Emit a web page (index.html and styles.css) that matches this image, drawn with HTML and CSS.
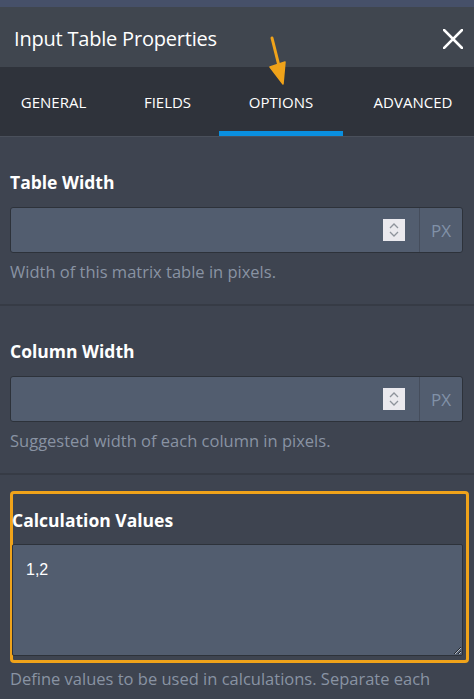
FILE: index.html
```html
<!DOCTYPE html>
<html lang="en">
<head>
    <meta charset="UTF-8">
    <meta name="viewport" content="width=device-width, initial-scale=1.0">
    <title>Input Table Properties</title>
    <link rel="stylesheet" href="styles.css">
</head>
<body>

    <div class="strip"></div>

    <header class="head">
        <h1>Input Table Properties</h1>
        <button class="close" type="button" aria-label="Close">
            <svg width="20" height="20" viewBox="0 0 20 20">
                <path d="M1 1 L19 19 M19 1 L1 19" stroke="#fff" stroke-width="2.6" stroke-linecap="square"/>
            </svg>
        </button>
    </header>

    <nav class="tabs">
        <a class="tab">GENERAL</a>
        <a class="tab">FIELDS</a>
        <a class="tab active">OPTIONS</a>
        <a class="tab">ADVANCED</a>
        <!-- pointer drawn over the tabs -->
        <svg class="arrow" width="30" height="56" viewBox="0 0 30 56">
            <path d="M8 2 L17 38" stroke="#f0a31a" stroke-width="3" stroke-linecap="round"/>
            <path d="M6 31 L19 48 L21 26 Z" fill="#f0a31a" stroke="#f0a31a" stroke-width="1.5" stroke-linejoin="round"/>
        </svg>
    </nav>

    <main>
        <section class="field">
            <label for="tw">Table Width</label>
            <div class="group">
                <div class="num">
                    <input type="text" id="tw">
                    <span class="spin">
                        <svg width="22" height="22" viewBox="0 0 22 22">
                            <path d="M7 9 L11 5 L15 9 M7 13 L11 17 L15 13" fill="none" stroke="#8e939c" stroke-width="1.3"/>
                        </svg>
                    </span>
                </div>
                <span class="unit">PX</span>
            </div>
            <p class="help">Width of this matrix table in pixels.</p>
        </section>

        <section class="field">
            <label for="cw">Column Width</label>
            <div class="group">
                <div class="num">
                    <input type="text" id="cw">
                    <span class="spin">
                        <svg width="22" height="22" viewBox="0 0 22 22">
                            <path d="M7 9 L11 5 L15 9 M7 13 L11 17 L15 13" fill="none" stroke="#8e939c" stroke-width="1.3"/>
                        </svg>
                    </span>
                </div>
                <span class="unit">PX</span>
            </div>
            <p class="help">Suggested width of each column in pixels.</p>
        </section>

        <section class="field last">
            <div class="mark">
                <label for="cv">Calculation Values</label>
                <textarea id="cv">1,2</textarea>
            </div>
            <p class="help">Define values to be used in calculations. Separate each</p>
        </section>
    </main>

</body>
</html>
```

FILE: styles.css
```css
* {
    box-sizing: border-box;
}

body {
    margin: 0;
    background: #3e4450;
    font-family: "Open Sans", "Noto Sans", sans-serif;
    color: #fff;
    height: 699px;
    overflow: hidden;
}

.strip {
    height: 7px;
    background: #465069;
}

.head {
    display: flex;
    align-items: center;
    justify-content: space-between;
    height: 60px;
    padding: 3px 11px 0 14px;
    background: #40464f;
}

.head h1 {
    margin: 0;
    font-size: 20px;
    font-weight: 400;
    letter-spacing: -0.2px;
}

.close {
    background: none;
    border: 0;
    padding: 0;
    width: 20px;
    height: 20px;
}

.tabs {
    position: relative;
    display: flex;
    height: 70px;
    background: #2f333b;
    border-bottom: 1px solid #4a505b;
}

.tab {
    flex: 1;
    display: flex;
    align-items: center;
    justify-content: center;
    font-size: 15px;
    color: #fff;
    border-bottom: 5px solid transparent;
    padding-top: 5px;
}

.tab:first-child {
    flex: 0 0 107px;
}

.tabs .tab:nth-child(2) {
    flex: 0 0 112px;
    padding-left: 9px;
}

.tab.active {
    flex: 0 0 124px;
    border-bottom-color: #0a8fdf;
}

.tab:nth-child(4) {
    padding-left: 9px;
}

.arrow {
    position: absolute;
    left: 264px;
    top: -31px;
}

.field {
    padding: 33px 10px 21px 10px;
    border-bottom: 2px solid #363b45;
}

.field label {
    display: block;
    font-weight: 700;
    font-size: 17.5px;
    line-height: 24px;
    margin-bottom: 13px;
}

.group {
    display: flex;
    height: 46px;
    margin-right: 1px;
    border: 1px solid #2d323a;
    border-radius: 3px;
    background: #525d6f;
}

.num {
    flex: 1;
    display: flex;
    align-items: center;
    padding-right: 14px;
}

.num input {
    flex: 1;
    height: 100%;
    border: 0;
    background: transparent;
    outline: none;
}

.spin {
    display: flex;
    width: 22px;
    height: 22px;
    background: #eae9ee;
}

.unit {
    width: 43px;
    display: flex;
    align-items: center;
    justify-content: center;
    border-left: 1px solid #454d5c;
    color: #8191a8;
    font-size: 17px;
}

.help {
    margin: 8px 0 0 0;
    font-size: 16.5px;
    line-height: 22px;
    color: #8993a3;
}

.field.last {
    padding-top: 16px;
    border-bottom: 0;
}

.mark {
    border: 3px solid #f0a31a;
    border-radius: 4px;
    margin-right: -5px;
    padding: 14px 3px 4px 0;
}

.mark label {
    margin-left: -1px;
    margin-bottom: 12px;
}

.mark textarea {
    display: block;
    width: calc(100% + 1px);
    margin-left: -1px;
    height: 112px;
    border: 1px solid #2d323a;
    border-radius: 2px;
    background: #525d6f;
    color: #fff;
    font-family: "Liberation Sans", Arial, sans-serif;
    font-size: 16px;
    padding: 16px 13px;
    resize: vertical;
    outline: none;
}

.last .help {
    margin-top: 5px;
}
```
